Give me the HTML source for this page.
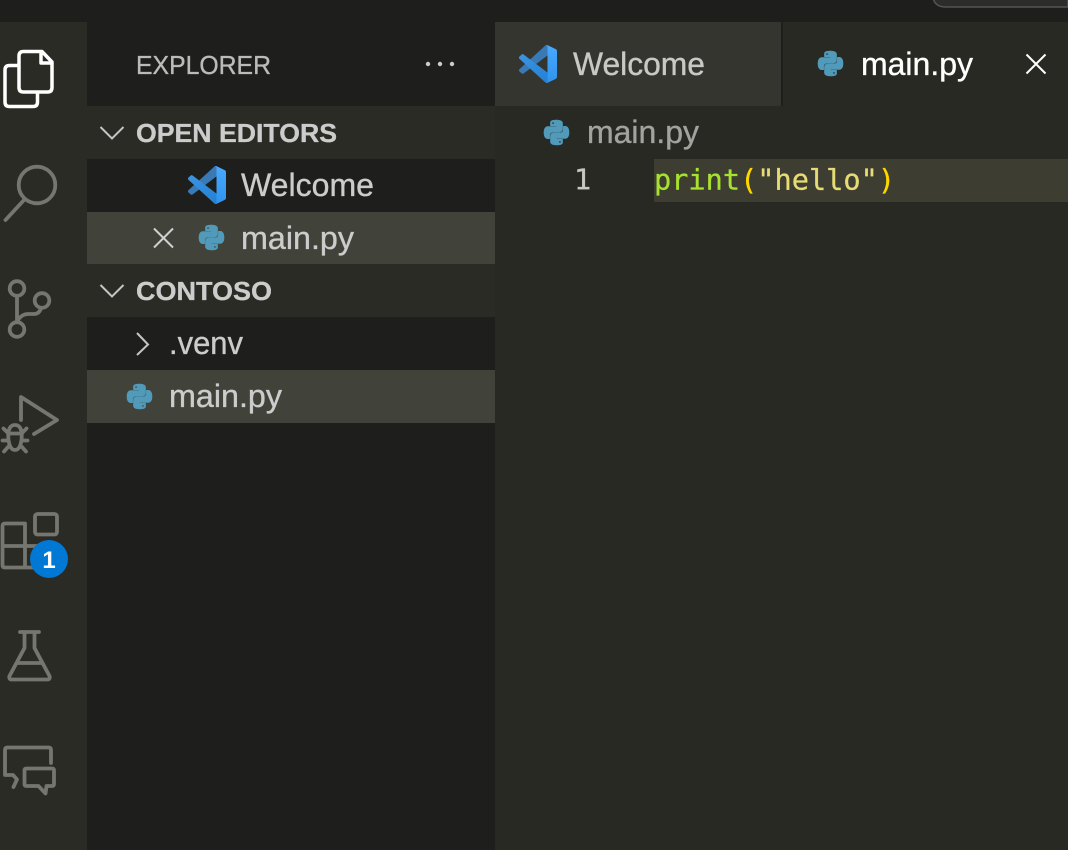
<!DOCTYPE html>
<html><head><meta charset="utf-8"><title>main.py</title>
<style>
html,body{margin:0;padding:0;background:#1e1e1c;width:1068px;height:850px;overflow:hidden}
svg{display:block}
.ui{font-family:"Liberation Sans",sans-serif;font-size:32px;stroke-width:.35px}
.hd{font-family:"Liberation Sans",sans-serif;font-size:26px;font-weight:bold;fill:#cccccc;stroke:#cccccc;stroke-width:.3px}
.mono{font-family:"DejaVu Sans Mono",monospace;font-size:28.6px;stroke-width:.3px}
.ic{fill:none;stroke:#75766f;stroke-width:3.8;stroke-linecap:round;stroke-linejoin:round}
</style></head><body>
<svg width="1068" height="850" viewBox="0 0 1068 850" xmlns="http://www.w3.org/2000/svg">
<defs>
<linearGradient id="pn" x1="0" y1="0" x2="0" y2="1"><stop offset="0" stop-color="#4aa9ff"/><stop offset="1" stop-color="#2f93ec"/></linearGradient>
<linearGradient id="ar" x1="0" y1="0" x2="1" y2="1"><stop offset="0" stop-color="#3d94e2"/><stop offset="1" stop-color="#1f7ed2"/></linearGradient>
<symbol id="vs" viewBox="0 0 100 100">
<path fill="#3979b4" d="M96.4614 10.7962L75.8569 0.875542C73.4719 -0.272773 70.6217 0.211611 68.75 2.08333L1.29858 63.5832C-0.515693 65.2373 -0.513607 68.0937 1.30308 69.7452L6.81272 74.754C8.29793 76.1042 10.5347 76.2036 12.1338 74.9905L93.3609 13.3699C96.086 11.3026 100 13.2462 100 16.6667V16.4275C100 14.0265 98.6246 11.8378 96.4614 10.7962Z"/>
<path fill="url(#ar)" d="M96.4614 89.2038L75.8569 99.1245C73.4719 100.273 70.6217 99.7884 68.75 97.9167L1.29858 36.4168C-0.515693 34.7627 -0.513607 31.9063 1.30308 30.2548L6.81272 25.246C8.29793 23.8958 10.5347 23.7964 12.1338 25.0095L93.3609 86.6301C96.086 88.6974 100 86.7538 100 83.3333V83.5725C100 85.9735 98.6246 88.1622 96.4614 89.2038Z"/>
<path fill="url(#pn)" d="M75.8578 99.1263C73.4721 100.274 70.6219 99.7885 68.75 97.9166C71.0564 100.223 75 98.5895 75 95.3278V4.67213C75 1.41039 71.0564 -0.223106 68.75 2.08329C70.6219 0.211402 73.4721 -0.273666 75.8578 0.873633L96.4587 10.7807C98.6234 11.8217 100 14.0112 100 16.4132V83.5871C100 85.9891 98.6234 88.1786 96.4586 89.2196L75.8578 99.1263Z"/>
</symbol>
<symbol id="py" viewBox="-1 -1 26 26">
<path fill="#519aba" stroke="#519aba" stroke-width=".55" d="M14.25.18l.9.2.73.26.59.3.45.32.34.34.25.34.16.33.1.3.04.26.02.2-.01.13V8.5l-.05.63-.13.55-.21.46-.26.38-.3.31-.33.25-.35.19-.35.14-.33.1-.3.07-.26.04-.21.02H8.77l-.69.05-.59.14-.5.22-.41.27-.33.32-.27.35-.2.36-.15.37-.1.35-.07.32-.04.27-.02.21v3.06H3.17l-.21-.03-.28-.07-.32-.12-.35-.18-.36-.26-.36-.36-.35-.46-.32-.59-.28-.73-.21-.88-.14-1.05-.05-1.23.06-1.22.16-1.04.24-.87.32-.71.36-.57.4-.44.42-.33.42-.24.4-.16.36-.1.32-.05.24-.01h.16l.06.01h8.16v-.83H6.18l-.01-2.75-.02-.37.05-.34.11-.31.17-.28.25-.26.31-.23.38-.2.44-.18.51-.15.58-.12.64-.1.71-.06.77-.04.84-.02 1.27.05zm-6.3 1.98l-.23.33-.08.41.08.41.23.34.33.22.41.09.41-.09.33-.22.23-.34.08-.41-.08-.41-.23-.33-.33-.22-.41-.09-.41.09zm13.09 3.95l.28.06.32.12.35.18.36.27.36.35.35.47.32.59.28.73.21.88.14 1.04.05 1.23-.06 1.23-.16 1.04-.24.86-.32.71-.36.57-.4.45-.42.33-.42.24-.4.16-.36.09-.32.05-.24.02-.16-.01h-8.22v.82h5.84l.01 2.76.02.36-.05.34-.11.31-.17.29-.25.25-.31.24-.38.2-.44.17-.51.15-.58.13-.64.09-.71.07-.77.04-.84.01-1.27-.04-1.07-.14-.9-.2-.73-.25-.59-.3-.45-.33-.34-.34-.25-.34-.16-.33-.1-.3-.04-.25-.02-.2.01-.13v-5.34l.05-.64.13-.54.21-.46.26-.38.3-.32.33-.24.35-.2.35-.14.33-.1.3-.06.26-.04.21-.02.13-.01h5.84l.69-.05.59-.14.5-.21.41-.28.33-.32.27-.35.2-.36.15-.36.1-.35.07-.32.04-.28.02-.21V6.07h2.09l.14.01zm-6.47 14.25l-.23.33-.08.41.08.41.23.33.33.23.41.08.41-.08.33-.23.23-.33.08-.41-.08-.41-.23-.33-.33-.23-.41-.08-.41.08z"/>
</symbol>
</defs>

<!-- backgrounds -->
<rect width="1068" height="850" fill="#1e1e1c"/>
<path d="M933 -2 Q935 7 946 7 H1068 V-2Z" fill="#2c2c2a" stroke="#55554f" stroke-width="1.5"/>
<rect x="0" y="22" width="87" height="828" fill="#2a2b25"/>
<rect x="495" y="106" width="573" height="744" fill="#282923"/>
<rect x="495" y="22" width="286" height="84" fill="#353530"/>
<rect x="783" y="22" width="285" height="84" fill="#282923"/>
<rect x="87" y="106" width="408" height="53" fill="#2a2b25"/>
<rect x="87" y="212" width="408" height="52" fill="#414239"/>
<rect x="87" y="264" width="408" height="53" fill="#2a2b25"/>
<rect x="87" y="370" width="408" height="53" fill="#414239"/>
<rect x="654" y="159" width="414" height="43" fill="#3e3d32"/>

<!-- activity bar -->
<g fill="none" stroke="#ffffff" stroke-width="3.5" stroke-linejoin="round" stroke-linecap="round">
<path d="M18.500 65.500H9.500Q5 65.500 5 70V102Q5 106.500 9.500 106.500H33Q37.500 106.500 37.500 102V92.500"/>
<path d="M23.500 51.500H42L52 62V87.500Q52 92 47.500 92H23.500Q19 92 19 87.500V56Q19 51.500 23.500 51.500Z"/>
<path d="M41 53V63H51"/>
</g>
<circle cx="37" cy="185" r="18.300" class="ic"/>
<path d="M24 200L5.500 220" class="ic"/>
<circle cx="17" cy="288.500" r="7.300" class="ic"/>
<circle cx="42" cy="300.500" r="7.300" class="ic"/>
<circle cx="17" cy="329.500" r="7.300" class="ic"/>
<path d="M17 296V322M18 320Q22 314 28 314H34Q39 314 41 308.500" class="ic"/>
<path d="M21 420V397L57 420L34 434" class="ic"/>
<path d="M8.500 440Q7 425 15 425Q23 425 21.500 440Q20 450 15 450Q10 450 8.500 440ZM8 433.500H22M3.500 428.500L8 433M26.500 428.500L22 433M2.500 440.500H7M27.500 440.500H23M4 451.500L8.500 446.500M26 451.500L21.500 446.500" class="ic"/>
<rect x="35" y="514" width="22" height="20.500" rx="2.500" class="ic"/>
<path d="M25 523.500H5Q2.500 523.500 2.500 526V565Q2.500 567.500 5 567.500H36M25 523.500V567.500M2.500 546H37" class="ic"/>
<circle cx="49" cy="559" r="19" fill="#0078d4"/>
<text x="49" y="568" text-anchor="middle" font-family="Liberation Sans,sans-serif" font-size="24" font-weight="bold" fill="#ffffff">1</text>
<path d="M20 632H39M24.500 632V648L9.500 676Q8.500 679.500 12 679.500H47Q50.500 679.500 49.500 676L34.500 648V632M17.500 663H42" class="ic"/>
<path d="M51 763V750Q51 747.500 48.500 747.500H7.500Q5 747.500 5 750V775H13L17 779.500L13.500 787" class="ic"/>
<path d="M26.500 768.500H52Q54 768.500 54 770.500V784Q54 786 52 786H46.500L45.500 793.500L38.500 786H26.500Q24.500 786 24.500 784V770.500Q24.500 768.500 26.500 768.500Z" class="ic"/>

<!-- sidebar -->
<text x="136" y="74" class="ui" style="font-size:26px" fill="#bbbbbb" stroke="#bbbbbb" textLength="135" lengthAdjust="spacingAndGlyphs">EXPLORER</text>
<circle cx="428" cy="64" r="2.200" fill="#cccccc"/><circle cx="440" cy="64" r="2.200" fill="#cccccc"/><circle cx="452" cy="64" r="2.200" fill="#cccccc"/>

<path d="M100.500 127L112 138.500L123.500 127" fill="none" stroke="#c5c5c5" stroke-width="2"/>
<text x="136" y="142" class="hd" textLength="201" lengthAdjust="spacingAndGlyphs">OPEN EDITORS</text>
<use href="#vs" x="188" y="166" width="38" height="38"/>
<text x="241" y="196" class="ui" fill="#cccccc" stroke="#cccccc" textLength="133" lengthAdjust="spacingAndGlyphs">Welcome</text>
<path d="M154 228.500L173 247.500M173 228.500L154 247.500" stroke="#d0d0d0" stroke-width="2" fill="none"/>
<use href="#py" x="198" y="224" width="27" height="27"/>
<text x="241" y="249" class="ui" fill="#cccccc" stroke="#cccccc" textLength="113" lengthAdjust="spacingAndGlyphs">main.py</text>

<path d="M100.500 285L112 296.500L123.500 285" fill="none" stroke="#c5c5c5" stroke-width="2"/>
<text x="136" y="300" class="hd" textLength="136" lengthAdjust="spacingAndGlyphs">CONTOSO</text>
<path d="M137 333L148 344.500L137 355" fill="none" stroke="#c5c5c5" stroke-width="2"/>
<text x="169" y="354" class="ui" fill="#cccccc" stroke="#cccccc" textLength="74" lengthAdjust="spacingAndGlyphs">.venv</text>
<use href="#py" x="126" y="383" width="27" height="27"/>
<text x="169" y="407" class="ui" fill="#cccccc" stroke="#cccccc" textLength="113" lengthAdjust="spacingAndGlyphs">main.py</text>

<!-- tabs -->
<use href="#vs" x="519" y="45" width="38" height="38"/>
<text x="573" y="75" class="ui" fill="#c8c8c4" stroke="#c8c8c4" textLength="132" lengthAdjust="spacingAndGlyphs">Welcome</text>
<use href="#py" x="817" y="50" width="27" height="27"/>
<text x="861" y="75" class="ui" fill="#ffffff" stroke="#ffffff" textLength="112" lengthAdjust="spacingAndGlyphs">main.py</text>
<path d="M1026.500 54.500L1045.500 73.500M1045.500 54.500L1026.500 73.500" stroke="#ffffff" stroke-width="2" fill="none"/>

<!-- breadcrumb -->
<use href="#py" x="543" y="119" width="27" height="27"/>
<text x="587" y="143" class="ui" fill="#a2a29e" stroke="#a2a29e" textLength="112" lengthAdjust="spacingAndGlyphs">main.py</text>

<!-- code -->
<text x="574" y="189.500" class="mono" fill="#c8c8c2" stroke="#c8c8c2">1</text>
<text x="654" y="189.500" class="mono" xml:space="preserve"><tspan fill="#a6e22e" stroke="#a6e22e">print</tspan><tspan fill="#ffd700" stroke="#ffd700">(</tspan><tspan fill="#e6db74" stroke="#e6db74">"hello"</tspan><tspan fill="#ffd700" stroke="#ffd700">)</tspan></text>
</svg>
</body></html>
